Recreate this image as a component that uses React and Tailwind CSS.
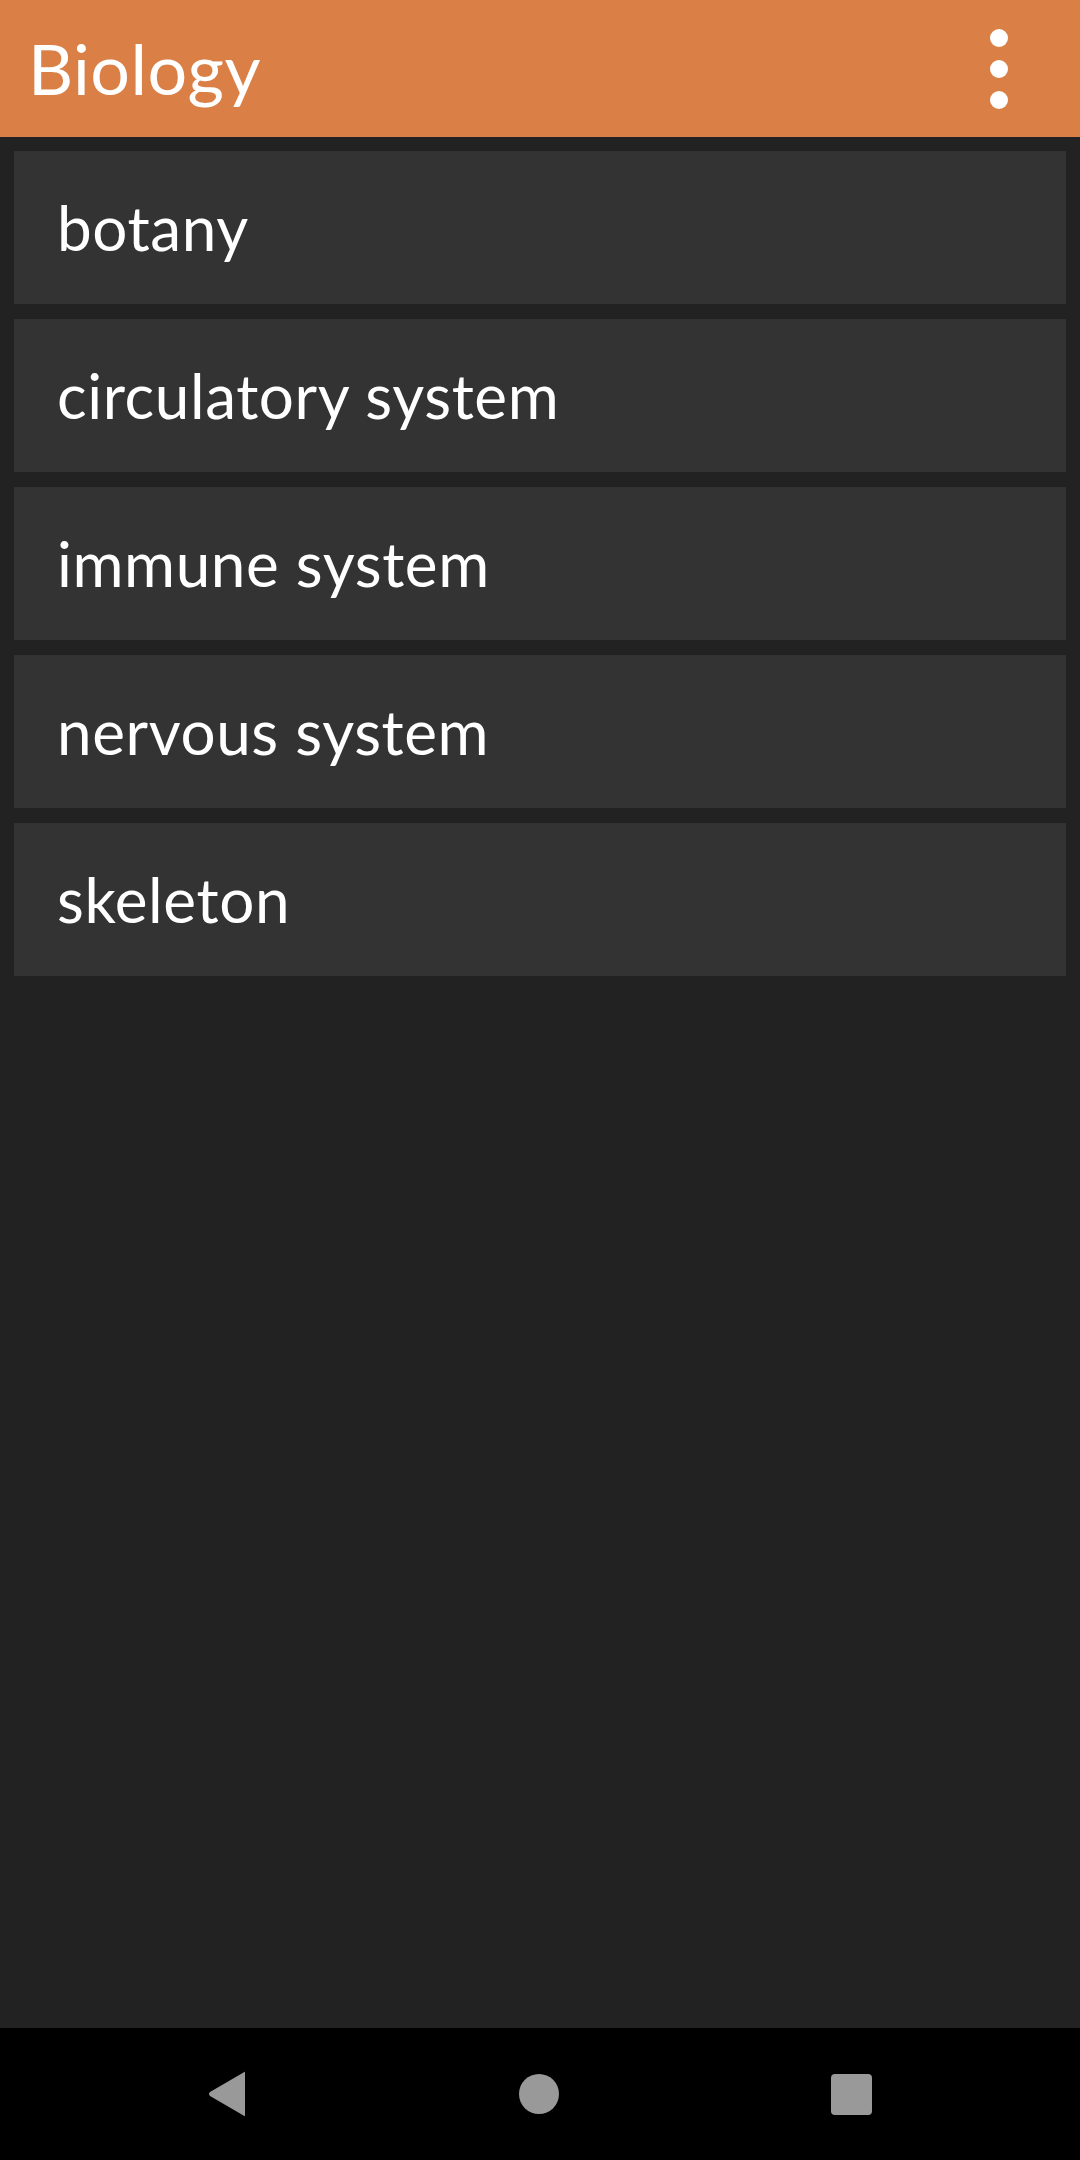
const topics = ["botany", "circulatory system", "immune system", "nervous system", "skeleton"];

export default function App() {
  return (
    <div className="w-[1080px] h-[2160px] flex flex-col bg-[#222222] font-['Lato',sans-serif] text-white overflow-hidden">
      {/* toolbar */}
      <header className="h-[137px] shrink-0 bg-[#da7f46] flex items-center justify-between pl-[28px] pr-[72px]">
        <h1 className="text-[70px] leading-none tracking-[0.5px] pb-[2px]">Biology</h1>
        <div className="flex flex-col gap-[13px]">
          <span className="w-[18px] h-[18px] rounded-full bg-white" />
          <span className="w-[18px] h-[18px] rounded-full bg-white" />
          <span className="w-[18px] h-[18px] rounded-full bg-white" />
        </div>
      </header>

      {/* list */}
      <main className="flex-1 flex flex-col gap-[15px] px-[14px] pt-[14px]">
        {topics.map((t) => (
          <div key={t} className="h-[153px] bg-[#333333] flex items-center pl-[43px]">
            <span className="text-[62px] leading-none tracking-[0.6px] pb-[2px]">{t}</span>
          </div>
        ))}
      </main>

      {/* android nav bar */}
      <nav className="h-[132px] shrink-0 bg-black flex items-center justify-center">
        <div className="w-[664px] flex items-center justify-between">
          <svg width="38" height="46" viewBox="0 0 38 46" className="fill-[#999999]">
            <path d="M37 2 L37 44 Q37 46 35.5 44.5 L2 25 Q0 23 2 21 L35.5 1.5 Q37 0 37 2 Z" />
          </svg>
          <span className="w-[40px] h-[40px] rounded-full bg-[#999999]" />
          <span className="w-[41px] h-[41px] rounded-[4px] bg-[#999999]" />
        </div>
      </nav>
    </div>
  );
}
